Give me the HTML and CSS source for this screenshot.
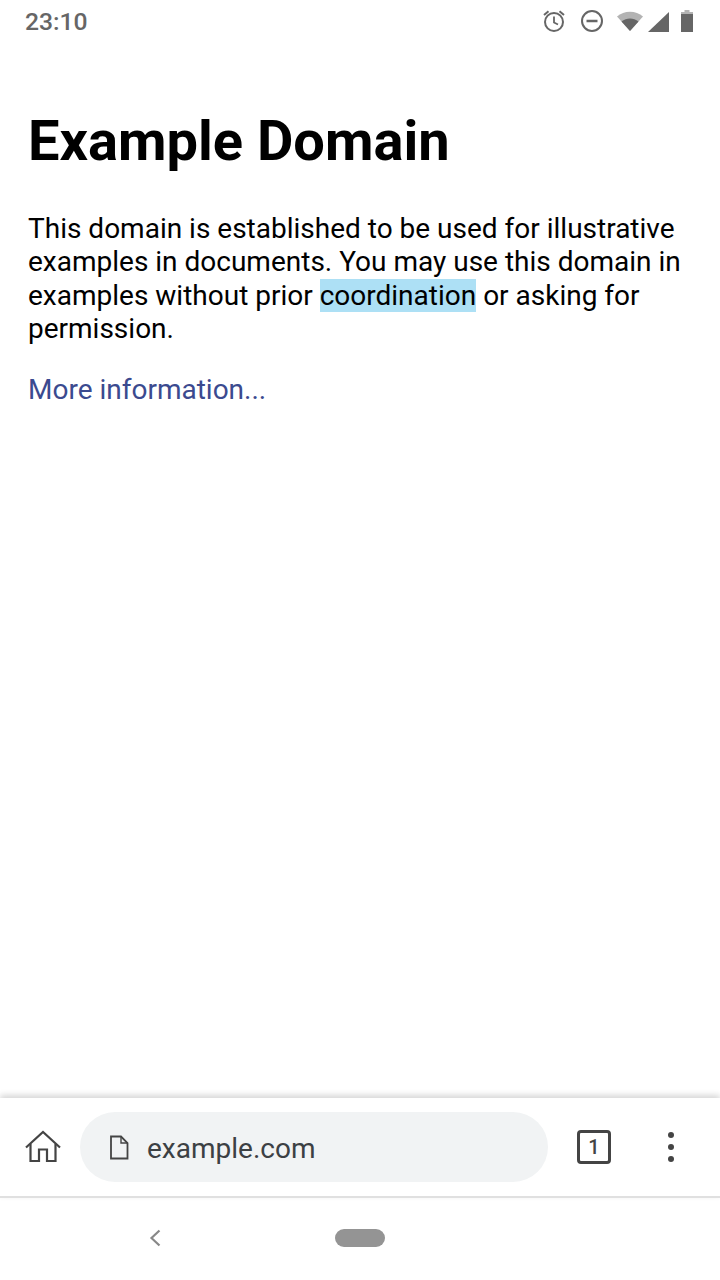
FILE: index.html
```html
<!DOCTYPE html>
<html lang="en">
<head>
  <meta charset="UTF-8">
  <meta name="viewport" content="width=device-width, initial-scale=1.0">
  <title>Example Domain</title>
  <link rel="stylesheet" href="styles.css">
</head>
<body>
  <div class="status-bar">
    <span class="clock">23:10</span>
    <div class="status-icons">
      <svg class="icon-alarm" width="24" height="24" viewBox="0 0 24 24" fill="none" stroke="#666" stroke-width="2">
        <circle cx="12" cy="13" r="9"/>
        <path d="M12 7.5V13.5L16 15.5" stroke-width="1.8"/>
        <path d="M2 6L6.5 2.2M22 6L17.5 2.2" stroke-width="2"/>
      </svg>
      <svg class="icon-dnd" width="24" height="24" viewBox="0 0 24 24" fill="none" stroke="#666" stroke-width="2">
        <circle cx="12" cy="12" r="10"/>
        <path d="M6.5 12H17.5" stroke-width="2.5"/>
      </svg>
      <svg class="icon-wifi" width="28" height="22" viewBox="0 0 28 22">
        <path d="M1 6.5C8 0 20 0 27 6.5L14 21Z" fill="#b3b3b3"/>
        <path d="M5.5 11.5C10.5 7.5 17.5 7.5 22.5 11.5L14 21Z" fill="#666"/>
      </svg>
      <svg class="icon-signal" width="21" height="20" viewBox="0 0 21 20">
        <path d="M0 20L21 0V20Z" fill="#666"/>
      </svg>
      <svg class="icon-battery" width="14" height="24" viewBox="0 0 14 24">
        <path d="M4.5 1H9.5V3H4.5Z" fill="#b3b3b3"/>
        <path d="M1 3H13V5H1Z" fill="#b3b3b3"/>
        <path d="M1 5H13V23H1Z" fill="#666"/>
      </svg>
    </div>
  </div>

  <main class="page">
    <h1>Example Domain</h1>
    <p>This domain is established to be used for illustrative examples in documents. You may use this domain in examples without prior <span class="selected">coordination</span> or asking for permission.</p>
    <p><a href="#">More information...</a></p>
  </main>

  <div class="toolbar">
    <svg class="icon-home" width="38" height="34" viewBox="0 0 38 34" fill="none" stroke="#444" stroke-width="2.2">
      <path d="M2 17.5L19 2L36 17.5"/>
      <path d="M6.5 14V31H15V19.5H23V31H31.5V14"/>
    </svg>
    <div class="omnibox">
      <svg class="icon-page" width="20" height="25" viewBox="0 0 20 25" fill="none" stroke="#444" stroke-width="1.8">
        <path d="M2 1.5H12L18.5 8V23.5H2Z"/>
        <path d="M12 1.5V8H18.5" stroke-width="1.4"/>
      </svg>
      <span class="url">example.com</span>
    </div>
    <div class="tab-count">1</div>
    <div class="menu-dots"><i></i><i></i><i></i></div>
  </div>

  <div class="nav-bar">
    <svg class="nav-back" width="12" height="18" viewBox="0 0 12 18" fill="none" stroke="#888" stroke-width="2.2">
      <path d="M10.5 1.5L2.5 9L10.5 16.5"/>
    </svg>
    <div class="nav-home"></div>
  </div>
</body>
</html>
```

FILE: styles.css
```css
body {
  margin: 0;
  width: 720px;
  height: 1280px;
  display: flex;
  flex-direction: column;
  overflow: hidden;
  background: #fff;
  color: #000;
  font-family: Roboto, sans-serif;
}

.status-bar {
  height: 44px;
  flex: none;
  display: flex;
  align-items: center;
  justify-content: space-between;
  padding: 0 26px 2px 25px;
  box-sizing: border-box;
}
.clock {
  font-size: 24.7px;
  font-weight: 500;
  color: #666;
}
.status-icons {
  display: flex;
  align-items: center;
}
.icon-alarm { margin-right: 14px; }
.icon-dnd { margin-right: 12px; }
.icon-wifi { margin-right: 4px; }
.icon-signal { margin-right: 11px; margin-top: 1px; }

.page {
  flex: 1;
  padding: 0 28px;
}
h1 {
  margin: 62px 0 0;
  font-size: 56px;
  line-height: 70px;
  font-weight: 700;
}
p {
  margin: 40px 0 0;
  font-size: 28px;
  line-height: 33.3px;
}
h1 + p { margin-top: 36px; }
p + p { margin-top: 28px; }
a {
  color: #3b4a8f;
  text-decoration: none;
}
.selected {
  background: #ade0f5;
}

.toolbar {
  height: 100px;
  flex: none;
  box-sizing: border-box;
  display: flex;
  align-items: center;
  border-bottom: 2px solid #e0e0e0;
  box-shadow: 0 -3px 6px rgba(0,0,0,0.16);
  padding: 0 0 0 24px;
  position: relative;
}
.omnibox {
  width: 468px;
  height: 70px;
  margin-left: 18px;
  border-radius: 35px;
  background: #f1f3f4;
  display: flex;
  align-items: center;
  padding-left: 29px;
  box-sizing: border-box;
}
.url {
  margin: 2px 0 0 18px;
  font-size: 28px;
  color: #3c4043;
}
.tab-count {
  width: 34px;
  height: 34px;
  box-sizing: border-box;
  margin-left: 29px;
  border: 3px solid #444;
  border-radius: 4px;
  display: flex;
  align-items: center;
  justify-content: center;
  font-size: 20px;
  font-weight: 500;
  color: #444;
}
.menu-dots {
  margin-left: 57px;
  display: flex;
  flex-direction: column;
  gap: 6px;
}
.menu-dots i {
  display: block;
  width: 6px;
  height: 6px;
  border-radius: 50%;
  background: #444;
}

.nav-bar {
  height: 82px;
  flex: none;
  box-sizing: border-box;
  display: flex;
  align-items: center;
  padding: 0 0 2px 149px;
}
.nav-home {
  width: 50px;
  height: 18px;
  margin-left: 174px;
  border-radius: 9px;
  background: #949494;
}
```
